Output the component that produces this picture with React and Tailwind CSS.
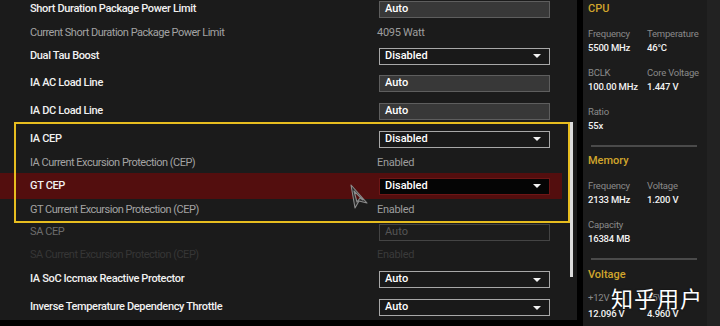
import React from "react";

const FONT = { fontFamily: "Roboto, 'Noto Sans', sans-serif" };

const rows = [
  { h: "h-[26px]", label: "Short Duration Package Power Limit", kind: "input", value: "Auto" },
  { h: "h-[22px]", label: "Current Short Duration Package Power Limit", kind: "info", value: "4095 Watt", dim: true },
  { h: "h-[24px]", label: "Dual Tau Boost", kind: "select", value: "Disabled" },
  { h: "h-[30px]", label: "IA AC Load Line", kind: "input", value: "Auto" },
  { h: "h-[26px]", label: "IA DC Load Line", kind: "input", value: "Auto" },
  { h: "h-[30px]", label: "IA CEP", kind: "select", value: "Disabled" },
  { h: "h-[19px]", label: "IA Current Excursion Protection (CEP)", kind: "info", value: "Enabled", dim: true },
  { h: "h-[26px]", label: "GT CEP", kind: "select", value: "Disabled", active: true },
  { h: "h-[22px]", label: "GT Current Excursion Protection (CEP)", kind: "info", value: "Enabled", dim: true },
  { h: "h-[22px]", label: "SA CEP", kind: "disabled", value: "Auto", off: true },
  { h: "h-[24px]", label: "SA Current Excursion Protection (CEP)", kind: "info", value: "Enabled", ghost: true },
  { h: "h-[25px]", label: "IA SoC Iccmax Reactive Protector", kind: "select", value: "Auto" },
  { h: "h-[31px]", label: "Inverse Temperature Dependency Throttle", kind: "select", value: "Auto" },
];

const Caret = () => (
  <svg width="8" height="4" viewBox="0 0 8 4" className="ml-auto mr-[8px]">
    <path d="M0 0 L8 0 L4 4 Z" fill="#f2f2f2" />
  </svg>
);

const Control = ({ row }) => {
  if (row.kind === "info") {
    return (
      <span
        className={`text-[11px] tracking-[-0.3px] ${row.ghost ? "text-[#3a3a3a]" : "text-[#9d9d9d]"}`}
      >
        {row.value}
      </span>
    );
  }
  if (row.kind === "select") {
    return (
      <div
        className={`ml-[2px] w-[171px] h-[17px] flex items-center pl-[5px] text-[11px] font-medium text-white border ${
          row.active ? "bg-[#050505] border-[#6e1616]" : "bg-[#191919] border-[#a8a8a8]"
        }`}
      >
        {row.value}
        <Caret />
      </div>
    );
  }
  if (row.kind === "disabled") {
    return (
      <div className="ml-[2px] w-[171px] h-[17px] flex items-center pl-[5px] text-[11px] text-[#555] bg-[#1c1c1c] border border-[#444]">
        {row.value}
      </div>
    );
  }
  return (
    <div className="ml-[2px] w-[171px] h-[17px] flex items-center pl-[5px] text-[11px] font-medium text-white bg-[#383838] border border-[#5e5e5e]">
      {row.value}
    </div>
  );
};

const SettingRow = ({ row }) => {
  let labelColor = "text-[#f1f1f1] font-medium tracking-[-0.35px]";
  if (row.dim) labelColor = "text-[#a3a3a3] tracking-[-0.5px]";
  if (row.off) labelColor = "text-[#6c6c6c] tracking-[-0.4px]";
  if (row.ghost) labelColor = "text-[#363636] tracking-[-0.5px]";
  return (
    <div className={`${row.h} w-[562px] flex items-center ${row.active ? "bg-[#530e0e]" : ""}`}>
      <div className={`w-[377px] pl-[30px] text-[11px] ${labelColor}`}>{row.label}</div>
      <Control row={row} />
    </div>
  );
};

const Stat = ({ label, value, gap = "" }) => (
  <div>
    <div className="h-[14px] leading-[14px] text-[9.5px] tracking-[-0.2px] text-[#8a8a8a]">{label}</div>
    <div className={`h-[14px] leading-[14px] text-[9.5px] tracking-[-0.2px] font-medium text-[#f2f2f2] ${gap}`}>
      {value}
    </div>
  </div>
);

const Section = ({ title, className = "" }) => (
  <div className={`h-[14px] leading-[14px] text-[11px] font-medium text-[#d1a52c] ${className}`}>
    {title}
  </div>
);

export default function App() {
  return (
    <div className="w-[720px] h-[326px] flex bg-black overflow-hidden relative" style={FONT}>
      <div className="w-[577px] h-full flex flex-col relative">
        <div className="h-[320px] bg-[#1b1b1b] overflow-hidden">
          <div className="-mt-[4px]">
            {rows.map((row) => (
              <SettingRow key={row.label} row={row} />
            ))}
          </div>
        </div>
        <div className="flex-1 bg-black" />

        {/* highlight box */}
        <div className="absolute left-[14px] top-[122px] w-[556px] h-[101px] border-2 border-[#e7bd1f] pointer-events-none" />
        {/* scrollbar thumb */}
        <div className="absolute left-[570px] top-[122px] w-[3px] h-[155px] bg-[#dcdcdc]" />
        {/* cursor */}
        <svg className="absolute left-[348px] top-[183px]" width="22" height="28" viewBox="0 0 22 28">
          <path
            d="M3 2 L19 20 L11 18 L7 25 Z M6 8 L9 19 L12 15 L15 17 Z"
            fill="#2a2a2a"
            fillRule="evenodd"
            stroke="#8c8c8c"
            strokeWidth="1.1"
            strokeLinejoin="round"
          />
        </svg>
      </div>

      <div className="w-[6px] bg-black" />

      <div className="w-[124px] h-full bg-[#1c1c1c] pl-[5px] pt-[2px]">
        <Section title="CPU" />
        <div className="mt-[11px] grid grid-cols-[59px_1fr] gap-y-[11px]">
          <Stat label="Frequency" value="5500 MHz" />
          <Stat label="Temperature" value="46°C" />
          <Stat label="BCLK" value="100.00 MHz" />
          <Stat label="Core Voltage" value="1.447 V" />
          <Stat label="Ratio" value="55x" />
        </div>
        <div className="mt-[12px] ml-[3px] w-[106px] h-[2px] bg-[#4a4a4a]" />
        <Section title="Memory" className="mt-[7px]" />
        <div className="mt-[11px] grid grid-cols-[59px_1fr] gap-y-[11px]">
          <Stat label="Frequency" value="2133 MHz" />
          <Stat label="Voltage" value="1.200 V" />
          <Stat label="Capacity" value="16384 MB" />
        </div>
        <div className="mt-[12px] ml-[3px] w-[106px] h-[2px] bg-[#4a4a4a]" />
        <Section title="Voltage" className="mt-[8px]" />
        <div className="mt-[9px] grid grid-cols-[59px_1fr]">
          <Stat label="+12V" value="12.096 V" gap="mt-[2px]" />
          <Stat label="+5V" value="4.960 V" gap="mt-[2px]" />
        </div>
      </div>

      <div className="w-[13px] h-full bg-[#222]" />

      {/* watermark */}
      <div
        className="absolute left-[611px] top-[286px] text-[22px] leading-[23px] text-white tracking-[1px]"
        style={{ fontFamily: "'Noto Sans CJK SC', sans-serif", textShadow: "0 0 2px rgba(0,0,0,0.6)" }}
      >
        知乎用户
      </div>
    </div>
  );
}
